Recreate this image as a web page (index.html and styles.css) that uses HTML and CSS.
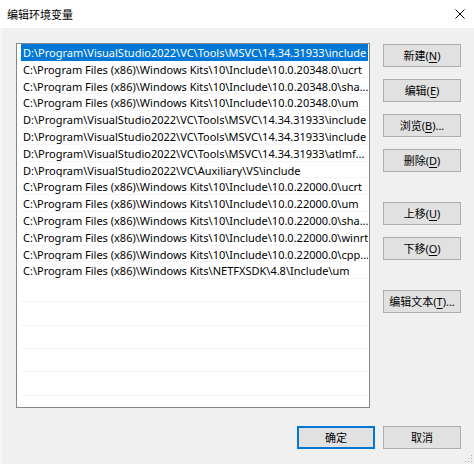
FILE: index.html
```html
<!DOCTYPE html>
<html lang="zh-CN">
<head>
    <meta charset="UTF-8">
    <title>编辑环境变量</title>
    <link rel="stylesheet" href="styles.css">
</head>
<body>
<div class="dialog">
    <div class="title_bar">
        <div class="title_text">编辑环境变量</div>
        <div class="btn_close">
            <svg width="10" height="10" viewBox="0 0 10 10">
                <path d="M0.5 0.5 L9.5 9.5 M9.5 0.5 L0.5 9.5" stroke="#000" stroke-width="1" fill="none"/>
            </svg>
        </div>
    </div>
    <div class="dialog_body">
        <div class="main_area">
            <div class="path_list">
                <div class="path_item selected">D:\Program\VisualStudio2022\VC\Tools\MSVC\14.34.31933\include</div>
                <div class="path_item">C:\Program Files (x86)\Windows Kits\10\Include\10.0.20348.0\ucrt</div>
                <div class="path_item">C:\Program Files (x86)\Windows Kits\10\Include\10.0.20348.0\sha...</div>
                <div class="path_item">C:\Program Files (x86)\Windows Kits\10\Include\10.0.20348.0\um</div>
                <div class="path_item">D:\Program\VisualStudio2022\VC\Tools\MSVC\14.34.31933\include</div>
                <div class="path_item">D:\Program\VisualStudio2022\VC\Tools\MSVC\14.34.31933\include</div>
                <div class="path_item">D:\Program\VisualStudio2022\VC\Tools\MSVC\14.34.31933\atlmf...</div>
                <div class="path_item">D:\Program\VisualStudio2022\VC\Auxiliary\VS\include</div>
                <div class="path_item">C:\Program Files (x86)\Windows Kits\10\Include\10.0.22000.0\ucrt</div>
                <div class="path_item">C:\Program Files (x86)\Windows Kits\10\Include\10.0.22000.0\um</div>
                <div class="path_item">C:\Program Files (x86)\Windows Kits\10\Include\10.0.22000.0\sha...</div>
                <div class="path_item">C:\Program Files (x86)\Windows Kits\10\Include\10.0.22000.0\winrt</div>
                <div class="path_item">C:\Program Files (x86)\Windows Kits\10\Include\10.0.22000.0\cpp...</div>
                <div class="path_item">C:\Program Files (x86)\Windows Kits\NETFXSDK\4.8\Include\um</div>
                <div class="path_empty"></div>
                <div class="path_empty"></div>
                <div class="path_empty"></div>
                <div class="path_empty"></div>
                <div class="path_empty"></div>
            </div>
            <div class="side_buttons">
                <div class="btn">新建(<u>N</u>)</div>
                <div class="btn">编辑(<u>E</u>)</div>
                <div class="btn">浏览(<u>B</u>)...</div>
                <div class="btn">删除(<u>D</u>)</div>
                <div class="btn group_start">上移(<u>U</u>)</div>
                <div class="btn">下移(<u>O</u>)</div>
                <div class="btn group_start">编辑文本(<u>T</u>)...</div>
            </div>
        </div>
        <div class="bottom_buttons">
            <div class="btn btn_default">确定</div>
            <div class="btn">取消</div>
        </div>
        <div class="grip">
            <svg width="8" height="8" viewBox="0 0 8 8">
                <rect x="6" y="0" width="1" height="1" fill="#b0b0b0"/>
                <rect x="3" y="3" width="1" height="1" fill="#b0b0b0"/>
                <rect x="6" y="3" width="1" height="1" fill="#b0b0b0"/>
                <rect x="0" y="6" width="1" height="1" fill="#b0b0b0"/>
                <rect x="3" y="6" width="1" height="1" fill="#b0b0b0"/>
                <rect x="6" y="6" width="1" height="1" fill="#b0b0b0"/>
            </svg>
        </div>
    </div>
</div>
</body>
</html>
```

FILE: styles.css
```css
body{
    margin: 0;
    font-family: "Noto Sans", "Noto Sans CJK SC", sans-serif;
    font-size: 11px;
    color: #000;
}
.dialog{
    box-sizing: border-box;
    width: 474px;
    height: 464px;
    background-color: #f0f0f0;
    border-left: 2px solid #f7f7f7;
    position: relative;
}
.dialog>.title_bar{
    box-sizing: border-box;
    height: 28px;
    margin-left: -2px;
    background-color: #fff;
    display: flex;
    align-items: center;
    justify-content: space-between;
    padding: 0 9px 0 7px;
}
.title_bar>.btn_close{
    display: flex;
}
.dialog>.dialog_body{
    padding: 15px 13px 0 14px;
}
.dialog_body>.main_area{
    display: flex;
    gap: 13px;
}
.main_area>.path_list{
    box-sizing: border-box;
    width: 354px;
    height: 365px;
    border: 1px solid #828790;
    background-color: #fff;
    padding: 0 1px 0 4px;
    overflow: hidden;
}
.path_list>.path_item{
    box-sizing: border-box;
    height: 16.8px;
    line-height: 17px;
    padding-left: 2px;
    white-space: nowrap;
    overflow: hidden;
    border-bottom: 1px solid #f5f5f5;
}
.path_list>.path_item.selected{
    background-color: #0078d7;
    color: #fff;
    border-bottom-color: #0078d7;
}
.path_list>.path_empty{
    box-sizing: border-box;
    height: 23.3px;
    border-bottom: 1px solid #f3f3f3;
}
.main_area>.side_buttons{
    display: flex;
    flex-direction: column;
    gap: 12px;
    padding-top: 1px;
}
.btn{
    box-sizing: border-box;
    width: 78px;
    height: 23px;
    background-color: #e1e1e1;
    border: 1px solid #adadad;
    display: flex;
    align-items: center;
    justify-content: center;
    padding-bottom: 1px;
}
.btn u{
    text-underline-offset: 2px;
}
.side_buttons>.group_start{
    margin-top: 18px;
}
.dialog_body>.bottom_buttons{
    display: flex;
    justify-content: flex-end;
    gap: 8px;
    margin-top: 18px;
}
.bottom_buttons>.btn_default{
    border-color: #0078d7;
    box-shadow: inset 0 0 0 1px #0078d7;
}
.dialog_body>.grip{
    position: absolute;
    right: 1px;
    bottom: 1px;
    display: flex;
}
```
